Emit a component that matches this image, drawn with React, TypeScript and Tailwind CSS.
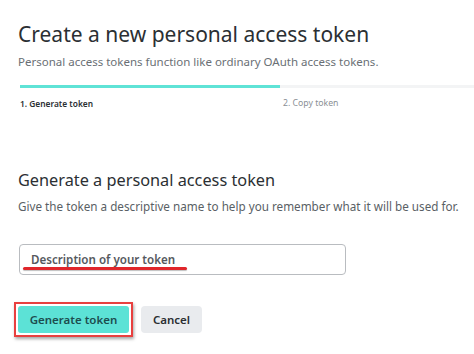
import React from "react";

export default function App() {
  return (
    <div
      className="w-[474px] h-[354px] bg-white overflow-hidden text-[#24292f]"
      style={{ fontFamily: '"Noto Sans", "Open Sans", sans-serif' }}
    >
      <div className="pl-[18px] pt-[18px]">
        <h1 className="text-[21px] leading-[32px] font-normal text-[#2b2f33]">
          Create a new personal access token
        </h1>
        <p className="mt-[3px] text-[11.5px] leading-[18px] text-[#6a6f75]">
          Personal access tokens function like ordinary OAuth access tokens.
        </p>
      </div>

      <div className="mt-[14px] pl-[20px] flex">
        <div className="w-[260px]">
          <div className="h-[3px] bg-[#5fe3d6]" />
          <div className="mt-[10px] text-[8.4px] leading-[11px] font-semibold text-[#2b2f33]">
            1. Generate token
          </div>
        </div>
        <div className="flex-1">
          <div className="h-[3px] bg-[#f3f4f5]" />
          <div className="mt-[10px] pl-[3px] text-[8.7px] leading-[11px] text-[#8a8f95]">
            2. Copy token
          </div>
        </div>
      </div>

      <div className="pl-[18px] mt-[59px]">
        <h2 className="text-[16.3px] leading-[24px] font-normal text-[#2b2f33]">
          Generate a personal access token
        </h2>
        <p className="mt-[5px] text-[11.7px] leading-[18px] text-[#5a5f65]">
          Give the token a descriptive name to help you remember what it will be used for.
        </p>
        <div className="mt-[29px] ml-[1px] w-[327px] h-[31px] rounded-[4px] border border-[#b9bcc0] relative flex items-center pl-[11px]">
          <span className="text-[11.6px] font-semibold text-[#55595e]">Description of your token</span>
          <div className="absolute left-[3px] top-[22px] w-[164px] h-[3px] rounded bg-[#e0262b] shadow-[0_1px_1px_rgba(0,0,0,0.25)]" />
        </div>
        <div className="mt-[27px] -ml-[4px] flex items-center gap-[8px]">
          <div className="border-[2px] border-[#e8403f] p-[2px] shadow-[1px_2px_3px_rgba(0,0,0,0.35)]">
            <button className="h-[27px] w-[111px] rounded-[3px] bg-[#5ce2d6] text-[11.5px] font-semibold text-[#1d4d4f]">
              Generate token
            </button>
          </div>
          <button className="h-[27px] w-[61px] rounded-[4px] bg-[#e9ebee] text-[11.5px] font-semibold text-[#2b2f33]">
            Cancel
          </button>
        </div>
      </div>
    </div>
  );
}
